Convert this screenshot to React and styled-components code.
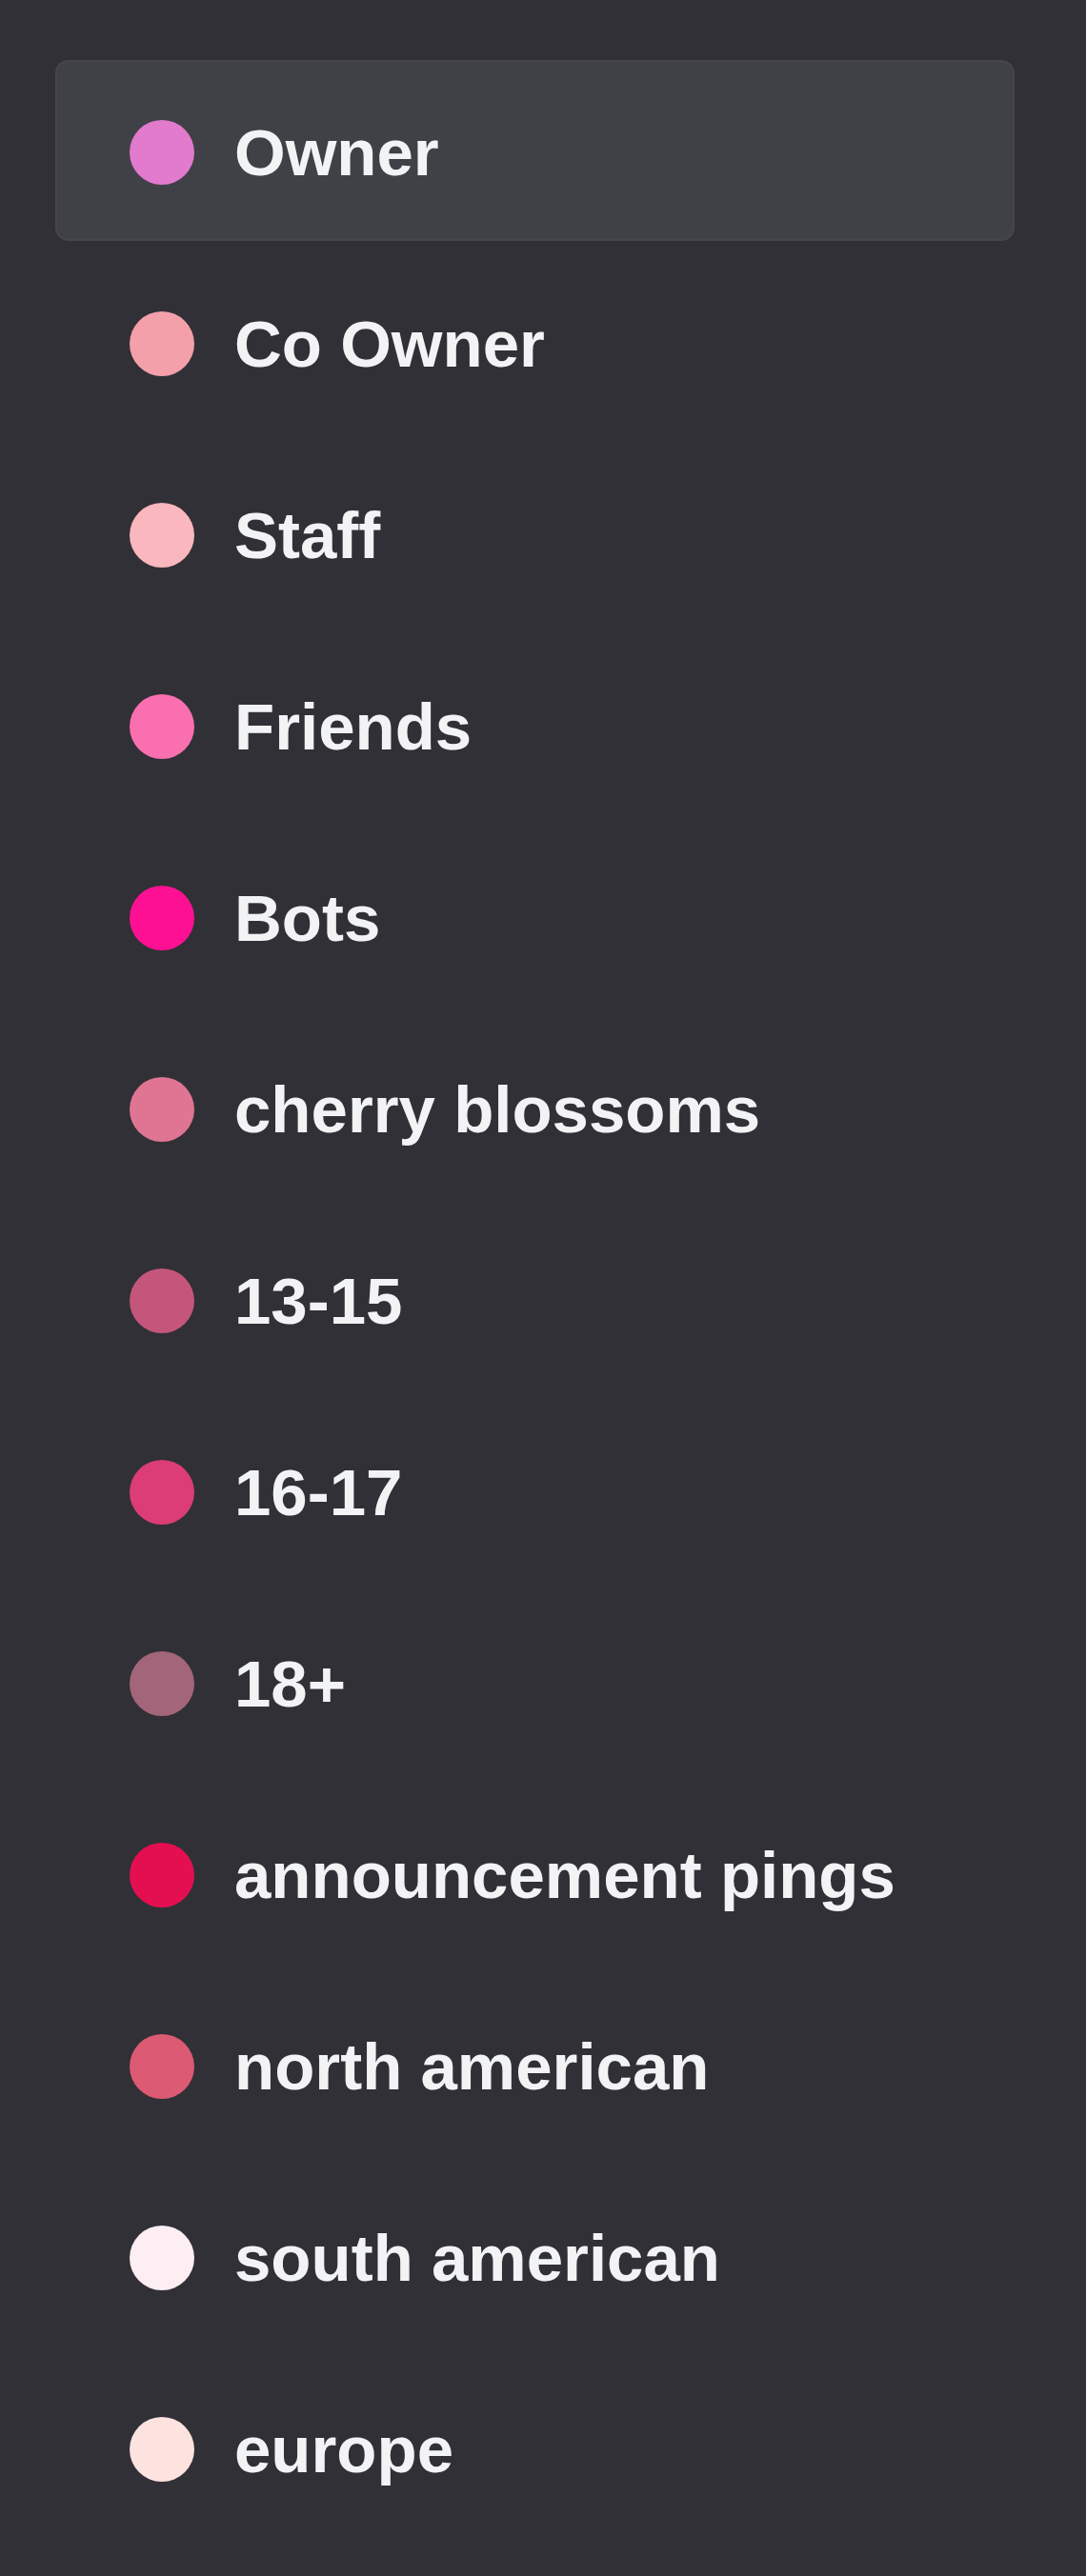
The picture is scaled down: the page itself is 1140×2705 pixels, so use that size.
import styled, { createGlobalStyle } from "styled-components"

const GlobalStyle = createGlobalStyle`
    html, body {
        margin: 0;
        padding: 0;
        background-color: #313036;
    }
`

const Page = styled.div`
    min-height: 100vh;
    background-color: #313036;
    padding: 63px 0 30px 58px;
    box-sizing: border-box;
    font-family: "Liberation Sans", Arial, sans-serif;
`

const List = styled.ul`
    list-style: none;
    margin: 0;
    padding: 0;
    width: 1007px;
    display: flex;
    flex-direction: column;
    gap: 11px;
`

const Item = styled.li`
    display: flex;
    align-items: center;
    gap: 42px;
    height: 190px;
    box-sizing: border-box;
    padding: 4px 0 0 76px;
    border-radius: 14px;
    border: 2px solid ${p => p.$active ? "#45464c" : "transparent"};
    background-color: ${p => p.$active ? "#404147" : "transparent"};
`

const Dot = styled.span`
    flex: none;
    width: 68px;
    height: 68px;
    border-radius: 50%;
    background-color: ${p => p.$color};
`

const Name = styled.span`
    color: #f2f3f5;
    font-size: 69px;
    font-weight: 700;
    white-space: nowrap;
`

const roles = [
    { name: "Owner", color: "#e27acd" },
    { name: "Co Owner", color: "#f4a0ab" },
    { name: "Staff", color: "#fbb7be" },
    { name: "Friends", color: "#f96fb0" },
    { name: "Bots", color: "#fd1192" },
    { name: "cherry blossoms", color: "#df7592" },
    { name: "13-15", color: "#c4567c" },
    { name: "16-17", color: "#db3d74" },
    { name: "18+", color: "#a3657a" },
    { name: "announcement pings", color: "#e30f51" },
    { name: "north american", color: "#dc5a73" },
    { name: "south american", color: "#fdeef3" },
    { name: "europe", color: "#fde3e0" },
]

const App = () => {
    return (
        <>
            <GlobalStyle />
            <Page>
                <List>
                    {roles.map((role, i) => (
                        <Item key={role.name} $active={i === 0}>
                            <Dot $color={role.color} />
                            <Name>{role.name}</Name>
                        </Item>
                    ))}
                </List>
            </Page>
        </>
    )
}

export default App
